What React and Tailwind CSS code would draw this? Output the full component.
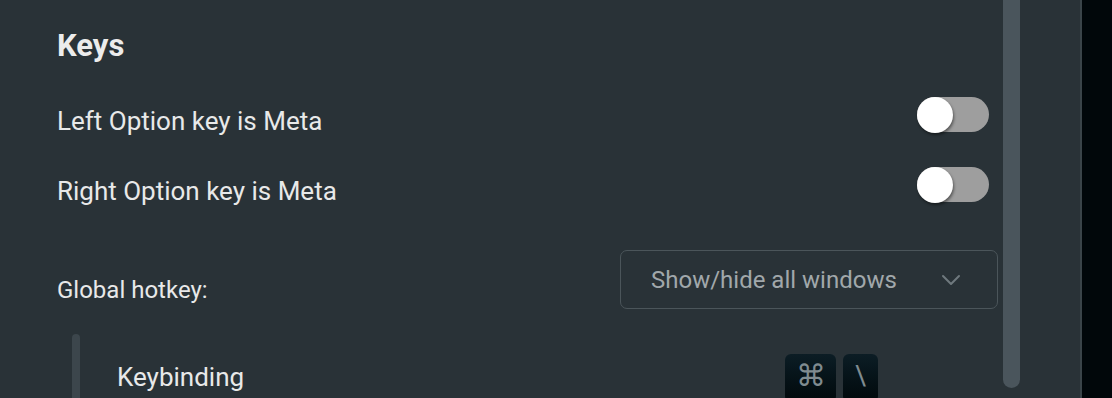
import React from 'react';

function Toggle() {
  return (
    <div className="relative w-[72px] h-[35px] shrink-0">
      <div className="absolute inset-0 rounded-full bg-[#9e9e9e]" />
      <div className="absolute left-0 top-0 w-[36px] h-[36px] rounded-full bg-white shadow-[1px_2px_3px_rgba(0,0,0,0.45)]" />
    </div>
  );
}

function ToggleRow({ label, className = '' }) {
  return (
    <div className={`flex items-start justify-between pr-[9px] ${className}`}>
      <span className="mt-[9px] text-[26px] leading-[30px] text-[#e8e9e9]">{label}</span>
      <Toggle />
    </div>
  );
}

function KeyCap({ children, className = '' }) {
  return (
    <div
      className={`h-[48px] rounded-[6px] bg-gradient-to-b from-[#0c1d25] to-[#02090c] flex items-start justify-center text-[#7f8b90] ${className}`}
    >
      {children}
    </div>
  );
}

export default function App() {
  return (
    <div className="flex w-[1112px] h-[398px] overflow-hidden bg-[#293237] font-['Roboto',sans-serif]">
      <div className="flex flex-1 min-w-0">
        {/* settings content */}
        <div className="w-[998px] shrink-0 pl-[57px] pt-[28px]">
          <h2 className="text-[31px] leading-[36px] font-bold text-[#ececec]">Keys</h2>

          <ToggleRow label="Left Option key is Meta" className="mt-[33px]" />
          <ToggleRow label="Right Option key is Meta" className="mt-[31px]" />

          <div className="mt-[44px] flex items-start justify-between">
            <span className="mt-[26px] text-[24px] leading-[28px] text-[#e8e9e9]">Global hotkey:</span>
            <div className="w-[378px] h-[59px] rounded-[7px] border-[1.5px] border-[#4b555a] flex items-center justify-between pl-[30px] pr-[36px]">
              <span className="text-[24px] leading-[28px] text-[#a1a8ab]">Show/hide all windows</span>
              <svg width="20" height="12" viewBox="0 0 20 12" fill="none">
                <path d="M2 2l8 8 8-8" stroke="#6f797e" strokeWidth="2" strokeLinecap="round" strokeLinejoin="round" />
              </svg>
            </div>
          </div>

          {/* nested keybinding block */}
          <div className="mt-[25px] ml-[15px] flex">
            <div className="w-[8px] h-[80px] rounded-t-full bg-[#3c464c] shrink-0" />
            <div className="w-[798px] pl-[37px] flex items-start justify-between">
              <span className="mt-[28px] text-[26px] leading-[30px] text-[#e8e9e9]">Keybinding</span>
              <div className="mt-[20px] flex gap-[7px]">
                <KeyCap className="w-[51px] pt-[5px] text-[30px] leading-[34px]">⌘</KeyCap>
                <KeyCap className="w-[35px] pt-[6px] text-[27px] leading-[32px]">\</KeyCap>
              </div>
            </div>
          </div>
        </div>

        {/* scrollbar */}
        <div className="ml-[5px] w-[17px] h-[388px] rounded-b-full bg-[#4a555c] shrink-0" />
      </div>
      <div className="w-[2px] bg-[#3a4449] shrink-0" />
      <div className="w-[30px] bg-[#01070a] shrink-0" />
    </div>
  );
}
